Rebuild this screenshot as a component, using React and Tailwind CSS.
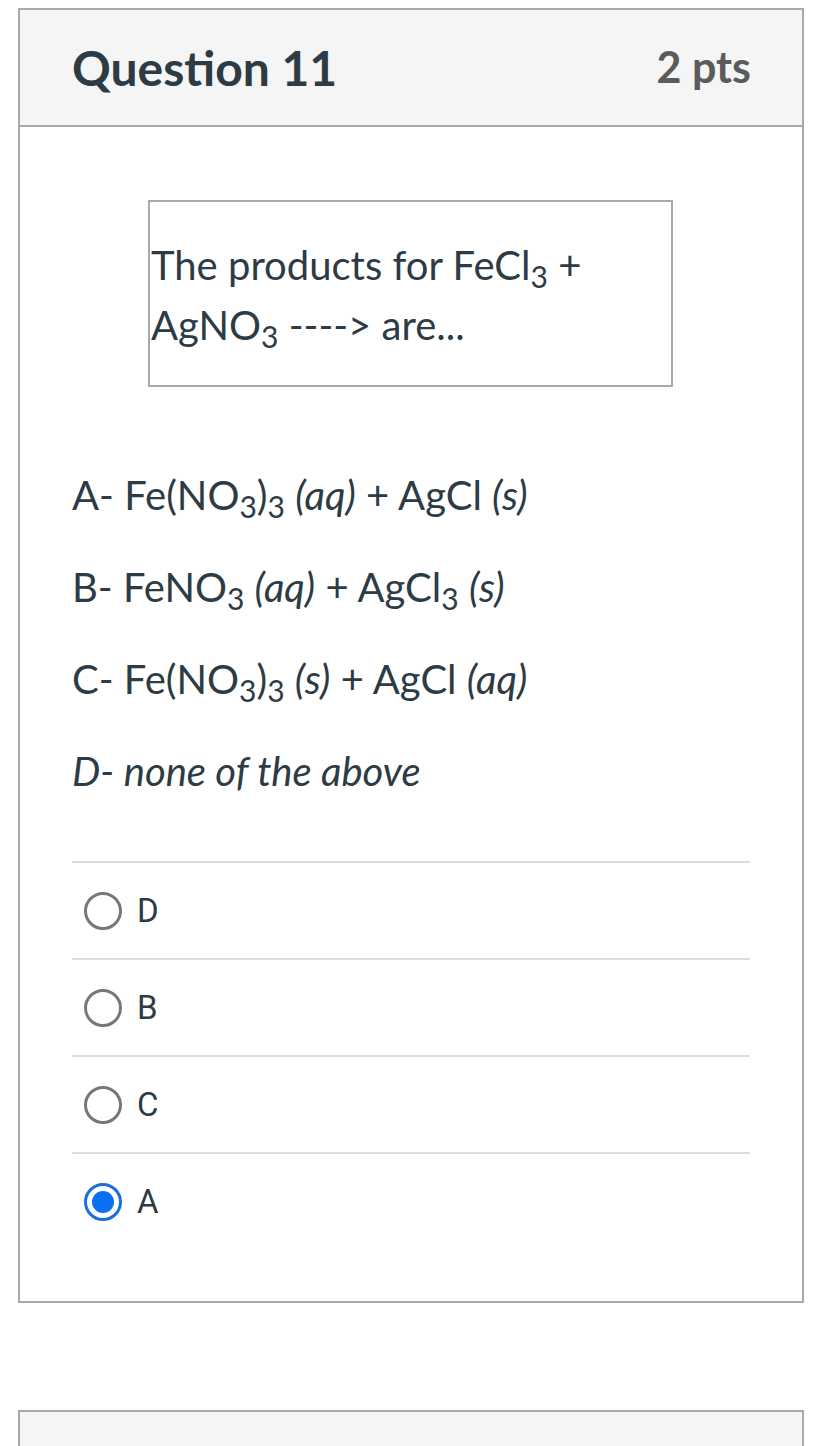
import React from 'react';

const lato = { fontFamily: 'Lato, "Open Sans", sans-serif' };

function Radio({ checked }) {
  if (checked) {
    return (
      <span className="flex h-[38px] w-[38px] shrink-0 items-center justify-center rounded-full border-[3px] border-[#1a6fd8] bg-white">
        <span className="h-[22px] w-[22px] rounded-full bg-[#0b6ff2]" />
      </span>
    );
  }
  return <span className="h-[38px] w-[38px] shrink-0 rounded-full border-[3px] border-[#777777] bg-white" />;
}

function Option({ label, checked }) {
  return (
    <div className="flex h-[97px] items-center border-t-2 border-[#dcdcdc] pl-[12px]">
      <Radio checked={checked} />
      <span className="ml-[15px] font-['Roboto',sans-serif] text-[33px] text-[#2d3b45]">{label}</span>
    </div>
  );
}

export default function App() {
  const options = [
    { label: 'D' },
    { label: 'B' },
    { label: 'C' },
    { label: 'A', checked: true },
  ];

  return (
    <div className="min-h-[1446px] overflow-hidden bg-white pt-[8px] text-[#2d3b45]" style={lato}>
      <section className="ml-[18px] w-[786px] border-2 border-[#a9a9a9]">
        <header className="flex h-[117px] items-center justify-between border-b-2 border-[#a9a9a9] bg-[#f5f5f5] pl-[52px] pr-[51px]">
          <h2 className="text-[48px] font-bold text-[#2d3b45]">Question 11</h2>
          <span className="text-[43px] font-bold text-[#5b5b5b]">2 pts</span>
        </header>

        <div className="px-[52px] pt-[73px] pb-[52px]">
          <div className="ml-[76px] w-[525px] border-2 border-[#a9a9a9] pt-[33px] pb-[30px] pl-[1px] text-[40px] leading-[60px]">
            The products for FeCl<sub>3</sub> +
            <br />
            AgNO<sub>3</sub> ----&gt; are...
          </div>

          <div className="mt-[62px] text-[40px] leading-[92px]">
            <p>
              A- Fe(NO<sub>3</sub>)<sub>3</sub> <em>(aq)</em> + AgCl <em>(s)</em>
            </p>
            <p>
              B- FeNO<sub>3</sub> <em>(aq)</em> + AgCl<sub>3</sub> <em>(s)</em>
            </p>
            <p>
              C- Fe(NO<sub>3</sub>)<sub>3</sub> <em>(s)</em> + AgCl <em>(aq)</em>
            </p>
            <p>
              <em>D- none of the above</em>
            </p>
          </div>

          <div className="mt-[44px]">
            {options.map((o) => (
              <Option key={o.label} label={o.label} checked={o.checked} />
            ))}
          </div>
        </div>
      </section>

      <section className="ml-[18px] mt-[107px] w-[786px] border-2 border-[#a9a9a9]">
        <div className="h-[117px] bg-[#f5f5f5]" />
      </section>
    </div>
  );
}
